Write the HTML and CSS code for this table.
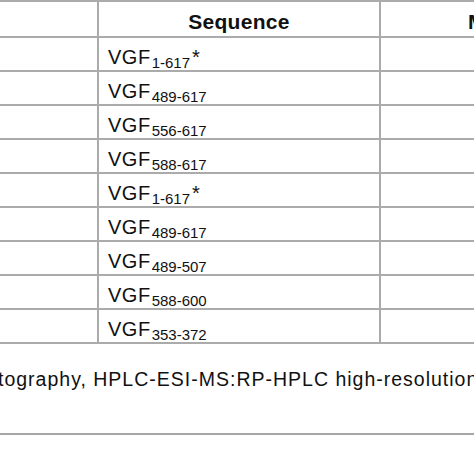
FILE: index.html
```html
<!DOCTYPE html>
<html>
<head>
<meta charset="utf-8">
<link rel="stylesheet" href="styles.css">
</head>
<body>
<div class="page">
  <table class="data">
    <colgroup>
      <col class="col1">
      <col class="col2">
      <col class="col3">
    </colgroup>
    <thead>
      <tr>
        <th class="c1"><div class="head"></div></th>
        <th class="c2"><div class="head center">Sequence</div></th>
        <th class="c3"><div class="head mass">Mass</div></th>
      </tr>
    </thead>
    <tbody>
      <tr><td class="c1"><div class="cell"></div></td><td class="c2"><div class="cell seq">VGF<sub>1-617</sub><span class="ast">*</span></div></td><td class="c3"><div class="cell"></div></td></tr>
      <tr><td class="c1"><div class="cell"></div></td><td class="c2"><div class="cell seq">VGF<sub>489-617</sub></div></td><td class="c3"><div class="cell"></div></td></tr>
      <tr><td class="c1"><div class="cell"></div></td><td class="c2"><div class="cell seq">VGF<sub>556-617</sub></div></td><td class="c3"><div class="cell"></div></td></tr>
      <tr><td class="c1"><div class="cell"></div></td><td class="c2"><div class="cell seq">VGF<sub>588-617</sub></div></td><td class="c3"><div class="cell"></div></td></tr>
      <tr><td class="c1"><div class="cell"></div></td><td class="c2"><div class="cell seq">VGF<sub>1-617</sub><span class="ast">*</span></div></td><td class="c3"><div class="cell"></div></td></tr>
      <tr><td class="c1"><div class="cell"></div></td><td class="c2"><div class="cell seq">VGF<sub>489-617</sub></div></td><td class="c3"><div class="cell"></div></td></tr>
      <tr><td class="c1"><div class="cell"></div></td><td class="c2"><div class="cell seq">VGF<sub>489-507</sub></div></td><td class="c3"><div class="cell"></div></td></tr>
      <tr><td class="c1"><div class="cell"></div></td><td class="c2"><div class="cell seq">VGF<sub>588-600</sub></div></td><td class="c3"><div class="cell"></div></td></tr>
      <tr><td class="c1"><div class="cell"></div></td><td class="c2"><div class="cell seq">VGF<sub>353-372</sub></div></td><td class="c3"><div class="cell"></div></td></tr>
    </tbody>
  </table>
  <div class="caption">
    <p class="caption-text">tography, HPLC-ESI-MS:RP-HPLC high-resolution electrospray ionization mass spectrometry</p>
  </div>
</div>
</body>
</html>
```

FILE: styles.css
```css
html, body {
  margin: 0;
  padding: 0;
  background: #ffffff;
  overflow: hidden;
}

body {
  font-family: "Liberation Sans", Arial, Helvetica, sans-serif;
  color: #111111;
}

.page {
  width: 474px;
  height: 474px;
  overflow: hidden;
}

.data {
  border-collapse: separate;
  border-spacing: 0;
  table-layout: fixed;
  width: 605px;
  border-top: 2px solid #ababab;
}

.col1 { width: 99px; }
.col2 { width: 282px; }
.col3 { width: 224px; }

.data th,
.data td {
  padding: 0;
  border-bottom: 2px solid #ababab;
  vertical-align: top;
}

.data .c1,
.data .c2 {
  border-right: 2px solid #ababab;
}

.head {
  box-sizing: border-box;
  height: 34px;
  padding-top: 5px;
  line-height: 29px;
  font-size: 21px;
  font-weight: bold;
  letter-spacing: 0.3px;
  white-space: nowrap;
}

.center {
  text-align: center;
}

.mass {
  text-align: left;
  padding-left: 87px;
}

.cell {
  box-sizing: border-box;
  height: 32px;
  padding-top: 6px;
  line-height: 26px;
  font-size: 20px;
  white-space: nowrap;
}

.seq {
  padding-left: 9px;
  letter-spacing: 0.5px;
}

.seq sub {
  font-size: 15px;
  vertical-align: -3.5px;
  line-height: 0;
  letter-spacing: 0;
  margin-left: 1px;
}

.ast {
  margin-left: 2px;
}

.caption {
  box-sizing: border-box;
  height: 91px;
  padding-top: 24px;
  border-bottom: 2px solid #a6a6a6;
}

.caption-text {
  margin: 0;
  font-size: 19.5px;
  line-height: 22px;
  letter-spacing: 1px;
  white-space: nowrap;
  text-indent: -2px;
}
```
